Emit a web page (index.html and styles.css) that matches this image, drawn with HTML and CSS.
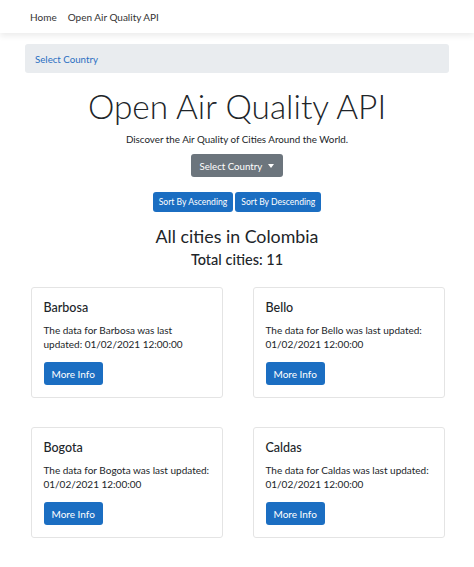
FILE: index.html
```html
<!DOCTYPE html>
<html lang="en">
<head>
    <meta charset="UTF-8">
    <meta name="viewport" content="width=device-width, initial-scale=1.0">
    <title>Open Air Quality API</title>
    <link rel="stylesheet" href="styles.css">
</head>
<body>

    <!-- Top navigation -->
    <nav class="navbar">
        <a href="#" class="nav-link">Home</a>
        <a href="#" class="nav-link">Open Air Quality API</a>
    </nav>

    <!-- Breadcrumb -->
    <div class="breadcrumb">
        <a href="#">Select Country</a>
    </div>

    <!-- Header -->
    <header class="hero">
        <h1>Open Air Quality API</h1>
        <p class="lead">Discover the Air Quality of Cities Around the World.</p>

        <button class="btn btn-secondary dropdown-toggle">Select Country <span class="caret"></span></button>

        <div class="sort-group">
            <button class="btn btn-primary btn-sm">Sort By Ascending</button>
            <button class="btn btn-primary btn-sm">Sort By Descending</button>
        </div>

        <h2>All cities in Colombia</h2>
        <h3>Total cities: 11</h3>
    </header>

    <!-- City cards -->
    <main class="cards">
        <div class="card">
            <h4 class="card-title">Barbosa</h4>
            <p class="card-text">The data for Barbosa was last updated: 01/02/2021 12:00:00</p>
            <button class="btn btn-primary">More Info</button>
        </div>
        <div class="card">
            <h4 class="card-title">Bello</h4>
            <p class="card-text">The data for Bello was last updated: 01/02/2021 12:00:00</p>
            <button class="btn btn-primary">More Info</button>
        </div>
        <div class="card">
            <h4 class="card-title">Bogota</h4>
            <p class="card-text">The data for Bogota was last updated: 01/02/2021 12:00:00</p>
            <button class="btn btn-primary">More Info</button>
        </div>
        <div class="card">
            <h4 class="card-title">Caldas</h4>
            <p class="card-text">The data for Caldas was last updated: 01/02/2021 12:00:00</p>
            <button class="btn btn-primary">More Info</button>
        </div>
    </main>

</body>
</html>
```
FILE: styles.css
```css
/* Base */
body {
    margin: 0;
    font-family: 'Lato', 'Open Sans', sans-serif;
    font-size: 10px;
    color: #212529;
    background: #ffffff;
}

a {
    text-decoration: none;
}

/* Navbar */
.navbar {
    height: 33px;
    display: flex;
    align-items: center;
    gap: 11px;
    padding-left: 30px;
    background: #ffffff;
    box-shadow: 0 3px 6px rgba(0, 0, 0, 0.08);
}

.nav-link {
    color: #333333;
    font-size: 10px;
}

/* Breadcrumb */
.breadcrumb {
    margin: 11px 25px 0;
    height: 29px;
    padding: 0 10px;
    display: flex;
    align-items: center;
    background: #e9ecef;
    border-radius: 3px;
}

.breadcrumb a {
    color: #2a6fc2;
    font-size: 9.7px;
}

/* Header */
.hero {
    text-align: center;
}

.hero h1 {
    margin: 13px 0 0;
    font-size: 33.4px;
    font-weight: 300;
    line-height: 40px;
}

.lead {
    margin: 6px 0 8px;
    font-size: 9.8px;
    line-height: 14px;
}

.btn {
    font-family: inherit;
    border: none;
    border-radius: 3px;
    color: #ffffff;
    cursor: pointer;
}

.btn-secondary {
    background: #6c757d;
    height: 23px;
    padding: 0 9px 0 8px;
    font-size: 9.7px;
}

.caret {
    display: inline-block;
    margin-left: 3px;
    vertical-align: 2px;
    border-top: 4px solid #ffffff;
    border-left: 3px solid transparent;
    border-right: 3px solid transparent;
}

.btn-primary {
    background: #1b6ec2;
}

.sort-group {
    margin-top: 15px;
    display: flex;
    justify-content: center;
    gap: 2px;
}

.btn-sm {
    height: 20px;
    padding: 0 6px;
    font-size: 8.6px;
}

.hero h2 {
    margin: 14px 0 0;
    font-size: 17.8px;
    font-weight: 400;
    line-height: 21px;
}

.hero h3 {
    margin: 4px 0 0;
    font-size: 14.5px;
    font-weight: 500;
    line-height: 17px;
}

/* Cards */
.cards {
    margin-top: 19px;
    display: grid;
    grid-template-columns: 192px 192px;
    column-gap: 30px;
    row-gap: 29px;
    justify-content: center;
    padding-left: 1px;
}

.card {
    border: 1px solid #e4e4e4;
    border-radius: 3px;
    padding: 12px;
}

.card-title {
    margin: 0 0 8px;
    font-size: 12.5px;
    font-weight: 500;
    line-height: 15px;
}

.card-text {
    margin: 0 0 11px;
    font-size: 10px;
    line-height: 14px;
}

.card .btn-primary {
    height: 23px;
    padding: 0 8px;
    font-size: 10px;
}
```
